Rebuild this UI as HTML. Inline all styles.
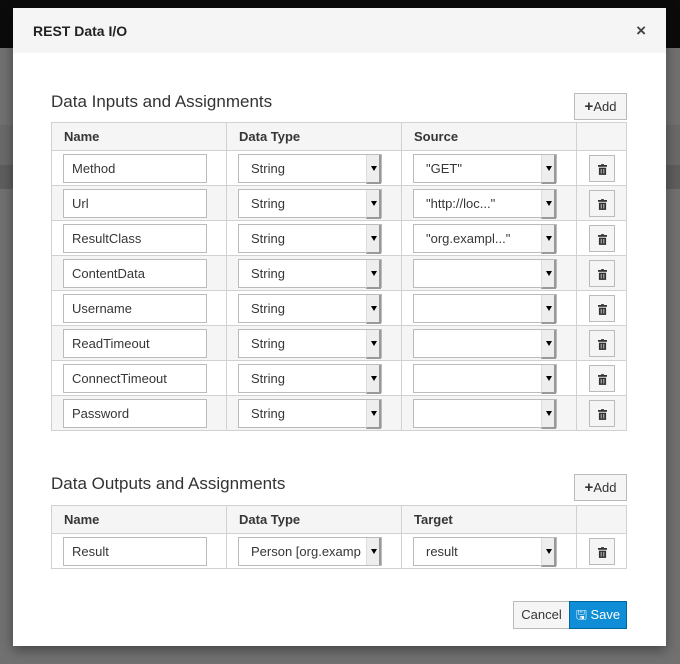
<!DOCTYPE html>
<html><head><meta charset="utf-8"><style>
*{box-sizing:border-box;margin:0;padding:0}
body{width:680px;height:664px;background:#717171;font-family:"Liberation Sans",sans-serif;position:relative;overflow:hidden;font-size:13px;color:#363636}
.topbar{position:absolute;left:0;top:0;width:680px;height:48px;background:#0b0b0b}
.band{position:absolute;left:0;top:125px;width:680px;height:40px;background:#6a6a6a}
.band2{position:absolute;left:0;top:165px;width:680px;height:24px;background:#5e5e5e}
.modal{position:absolute;left:13px;top:8px;width:653px;height:638px;background:#fff;box-shadow:0 4px 12px rgba(0,0,0,.4)}
.hdr{height:45px;background:#f5f5f5;padding:15px 20px;font-weight:bold;font-size:14px;color:#222}
.x{position:absolute;right:20px;top:13px;font-size:17px;font-weight:bold;color:#444}
.t{position:absolute;font-size:17px;color:#333}
.add{position:absolute;width:53px;height:27px;border:1px solid #bbb;background:#f5f5f5;font-size:13px;text-align:center;line-height:25px;color:#333}
.add b{font-size:15px}
table{position:absolute;left:38px;border-collapse:collapse;width:576px}
td,th{border:1px solid #d1d1d1;height:35px;padding:0}
th{height:28px;background:#f5f5f5;text-align:left;font-weight:bold;padding-left:12px;font-size:13px}
tr.g td{background:#f5f5f5}
.in{margin-left:11px;width:144px;height:29px;border:1px solid #bbb;background:#fff;padding-left:8px;line-height:27px}
.sel{margin-left:11px;width:144px;height:29px;border:1px solid #bbb;background:#fff;padding-left:12px;line-height:27px;position:relative}
.sel:after{content:"";position:absolute;right:0;top:0;width:12px;height:27px;background:#eee;border-left:1px solid #ddd;border-right:2px solid #999;border-bottom:2px solid #999}
.sel:before{content:"";position:absolute;right:4px;top:11px;border-left:3px solid transparent;border-right:3px solid transparent;border-top:5px solid #000;z-index:1}
.del{margin-left:12px;width:26px;height:27px;border:1px solid #bbb;background:#f5f5f5;text-align:center;padding-top:7px}
.btn{position:absolute;height:28px;line-height:26px;font-size:13px;text-align:center}
</style></head><body>
<div class="topbar"></div><div class="band"></div><div class="band2"></div>
<svg width="0" height="0" style="position:absolute"><symbol id="tr" viewBox="0 0 10 12"><rect x="0" y="1" width="10" height="2" fill="#333"/><rect x="3.5" y="0" width="3" height="1.5" fill="#333"/><path d="M1 4h8v8H1z" fill="#333"/><path d="M3.5 5.5v5M6.5 5.5v5" stroke="#f5f5f5" stroke-width="0.8"/></symbol></svg>
<div class="modal">
<div class="hdr">REST Data I/O</div><div class="x">×</div>
<div class="t" style="left:38px;top:84px">Data Inputs and Assignments</div>
<div class="add" style="left:561px;top:85px"><b>+</b>Add</div>
<table style="top:114px">
<tr><th style="width:175px">Name</th><th style="width:175px">Data Type</th><th style="width:175px">Source</th><th></th></tr>
<tr><td><div class="in">Method</div></td><td><div class="sel">String</div></td><td><div class="sel">"GET"</div></td><td><div class="del"><svg width="9" height="11"><use href="#tr"/></svg></div></td></tr>
<tr class="g"><td><div class="in">Url</div></td><td><div class="sel">String</div></td><td><div class="sel">"http://loc..."</div></td><td><div class="del"><svg width="9" height="11"><use href="#tr"/></svg></div></td></tr>
<tr><td><div class="in">ResultClass</div></td><td><div class="sel">String</div></td><td><div class="sel">"org.exampl..."</div></td><td><div class="del"><svg width="9" height="11"><use href="#tr"/></svg></div></td></tr>
<tr class="g"><td><div class="in">ContentData</div></td><td><div class="sel">String</div></td><td><div class="sel"></div></td><td><div class="del"><svg width="9" height="11"><use href="#tr"/></svg></div></td></tr>
<tr><td><div class="in">Username</div></td><td><div class="sel">String</div></td><td><div class="sel"></div></td><td><div class="del"><svg width="9" height="11"><use href="#tr"/></svg></div></td></tr>
<tr class="g"><td><div class="in">ReadTimeout</div></td><td><div class="sel">String</div></td><td><div class="sel"></div></td><td><div class="del"><svg width="9" height="11"><use href="#tr"/></svg></div></td></tr>
<tr><td><div class="in">ConnectTimeout</div></td><td><div class="sel">String</div></td><td><div class="sel"></div></td><td><div class="del"><svg width="9" height="11"><use href="#tr"/></svg></div></td></tr>
<tr class="g"><td><div class="in">Password</div></td><td><div class="sel">String</div></td><td><div class="sel"></div></td><td><div class="del"><svg width="9" height="11"><use href="#tr"/></svg></div></td></tr>
</table>
<div class="t" style="left:38px;top:466px">Data Outputs and Assignments</div>
<div class="add" style="left:561px;top:466px"><b>+</b>Add</div>
<table style="top:497px">
<tr><th style="width:175px">Name</th><th style="width:175px">Data Type</th><th style="width:175px">Target</th><th></th></tr>
<tr><td><div class="in">Result</div></td><td><div class="sel" style="overflow:hidden;white-space:nowrap">Person [org.examp</div></td><td><div class="sel">result</div></td><td><div class="del"><svg width="9" height="11"><use href="#tr"/></svg></div></td></tr>
</table>
<div class="btn" style="left:500px;top:593px;width:57px;border:1px solid #bbb;background:#f5f5f5">Cancel</div>
<div class="btn" style="left:556px;top:593px;width:58px;border:1px solid #00659c;background:#0f8dd6;color:#fff">🖫 Save</div>
</div>
</body></html>
